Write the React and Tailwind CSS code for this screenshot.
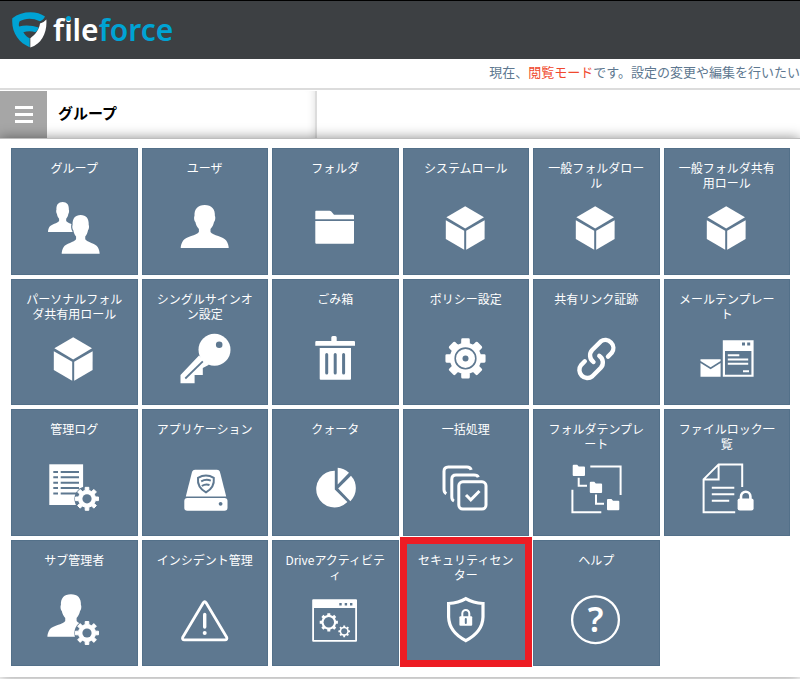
const TILE = '#5e7890';

// Outline of a cog, teeth included
const gearPath = (cx, cy, outer, inner, teeth) => {
  const step = (Math.PI * 2) / teeth;
  const pts = [];
  for (let i = 0; i < teeth; i++) {
    const a = i * step - Math.PI / 2;
    [[-0.27, inner], [-0.2, outer], [0.2, outer], [0.27, inner]].forEach(([k, r]) => {
      pts.push(`${(cx + r * Math.cos(a + k * step)).toFixed(2)} ${(cy + r * Math.sin(a + k * step)).toFixed(2)}`);
    });
  }
  return `M${pts.join('L')}Z`;
};

const Icon = ({ children }) => (
  <svg viewBox="0 0 60 60" className="mt-2 size-[60px] shrink-0" fill="#fff" aria-hidden="true">
    {children}
  </svg>
);

const PERSON =
  'M24 0C31 0 34.6 4 34.2 11C35 12 34.6 16 33.3 17C32.8 20 31.5 22 29.8 24V27C32 30.5 43 31.5 45.5 35.5C47.3 38 48 41 48 43H0C0 41 .7 38 2.5 35.5C5 31.5 16 30.5 18.2 27V24C16.5 22 15.2 20 14.7 17C13.4 16 13 12 13.8 11C13.4 4 17 0 24 0Z';

const GroupIcon = () => (
  <Icon>
    <path d={PERSON} transform="translate(4 4) scale(.61 .7)" />
    <path d={PERSON} transform="translate(17.7 17) scale(.79 .9)" stroke={TILE} strokeWidth="3" paintOrder="stroke" />
  </Icon>
);

const UserIcon = () => (
  <Icon>
    <path d={PERSON} transform="translate(5.7 7)" />
  </Icon>
);

const FolderIcon = () => (
  <Icon>
    <path d="M10.3 21.3V13.5Q10.3 12.7 11 12.7H24.5Q25.5 12.7 26.3 13.6L29 16.8H48Q49 16.8 49 17.8V21.3Z" />
    <path d="M10.3 23H49V44.7Q49 45.8 48 45.8H11.3Q10.3 45.8 10.3 44.7Z" />
  </Icon>
);

const CubeIcon = () => (
  <Icon>
    <path d="M29.2 8.3L48 19.3L29.2 30.4L10.4 19.3Z" />
    <path d="M9.8 22.2L28.2 32.8V51.8L9.8 41.1Z" />
    <path d="M48.6 22.2L30.2 32.8V51.8L48.6 41.1Z" />
  </Icon>
);

const KeyIcon = () => (
  <Icon>
    <circle cx="39.5" cy="20.8" r="16" />
    <path d="M24 26.5L5.5 46V54.3H19.6V46H27.8V39L34 35.8Z" />
    <circle cx="44.2" cy="15.7" r="3.3" fill={TILE} />
    <path d="M10.3 49.5L27.8 32.4" stroke={TILE} strokeWidth="1.8" />
  </Icon>
);

const TrashIcon = () => (
  <Icon>
    <path d="M26.3 12V8.5Q26.3 7 27.8 7H30.2Q31.7 7 31.7 8.5V12H49Q50 12 50 13V16.8H10.3V13Q10.3 12 11.3 12Z" />
    <path d="M14.7 19H46V49.7Q46 50.8 45 50.8H15.7Q14.7 50.8 14.7 49.7Z" />
    <path d="M21.7 25.5V44M30.2 25.5V44M38.6 25.5V44" stroke={TILE} strokeWidth="3" strokeLinecap="round" />
  </Icon>
);

const GearIcon = () => (
  <Icon>
    <path d={gearPath(29.5, 29.4, 19, 14.6, 8)} stroke="#fff" strokeWidth="2.6" strokeLinejoin="round" />
    <circle cx="29.5" cy="29.4" r="10.3" fill="none" stroke={TILE} strokeWidth="1.6" />
    <circle cx="29.5" cy="29.4" r="3" fill={TILE} />
  </Icon>
);

const LinkIcon = () => (
  <Icon>
    <g fill="none" stroke="#fff" strokeWidth="4.4" strokeLinecap="round">
      <path d="M42 27.6L45.7 23.9A8 8 0 0 0 34.6 12.6L26.2 21A8 8 0 0 0 27.5 33" />
      <path d="M18.8 32.3L15.2 35.9A8 8 0 0 0 26.4 47.2L34.8 38.8A8 8 0 0 0 33.3 26.8" />
    </g>
  </Icon>
);

const MailTemplateIcon = () => (
  <Icon>
    <path d="M3.5 30.3H23.6V32L13.6 38.2L3.5 32Z" />
    <path d="M3.5 34L13.6 40.3L23.6 34V47.8H3.5Z" />
    <path fillRule="evenodd" d="M25.8 11.3H56.6V47.8H25.8ZM28 22V45.8H54.4V22Z" />
    <path d="M45 13.6h3v3h-3zM50.2 13.6h3v3h-3z" fill={TILE} />
    <path d="M30.8 26.2H42.3M30.8 30.5H51.2M30.8 34.8H51.2M46 42.2H52" stroke="#fff" strokeWidth="2" />
  </Icon>
);

const SmallGear = ({ cy }) => (
  <>
    <circle cx="43" cy={cy} r="12.6" fill={TILE} />
    <path d={gearPath(43, cy, 11.6, 8.6, 8)} stroke="#fff" strokeWidth="1" strokeLinejoin="round" />
    <circle cx="43" cy={cy} r="4.6" fill={TILE} />
  </>
);

const LogIcon = () => (
  <Icon>
    <rect x="5.3" y="5.3" width="33.8" height="40.7" />
    <path
      d="M9.3 13H14M16.7 13H35M9.3 18.3H14M16.7 18.3H35M9.3 23.7H14M16.7 23.7H35M9.3 29H14M16.7 29H35M9.3 34.4H14M16.7 34.4H35"
      stroke={TILE}
      strokeWidth="2"
    />
    <SmallGear cy={39.8} />
  </Icon>
);

const DriveIcon = () => (
  <Icon>
    <path d="M20 10.7H42Q44.2 10.7 44.9 12.8L51.2 37.4H10.8L17.1 12.8Q17.8 10.7 20 10.7Z" />
    <rect x="9.3" y="39" width="43.2" height="12.8" rx="3" />
    <circle cx="45.6" cy="44.8" r="1.9" fill={TILE} />
    <path
      d="M23 18.8Q31 14.2 38.8 18.8Q39.8 28.5 31 33.3Q22 28.5 23 18.8ZM26.2 22.3Q31 19.8 35.8 21.6M26.8 27Q30.5 24.7 34.5 26"
      fill="none"
      stroke={TILE}
      strokeWidth="2"
    />
  </Icon>
);

const PieIcon = () => (
  <Icon>
    <path d="M29.8 11.8V30.5L42.4 43.1A18.3 18.3 0 1 1 29.8 11.8Z" />
    <path d="M32.7 8.8Q39 9.2 44 13.8L32.7 25.6Z" />
    <path d="M46 16.7A18.4 18.4 0 0 1 45.4 42.2L33.2 29.6Z" />
  </Icon>
);

const BatchIcon = () => (
  <Icon>
    <g fill="none" stroke="#fff" strokeWidth="3">
      <rect x="22.8" y="22.8" width="27.2" height="27.2" rx="4" />
      <path d="M30 36L34.8 40.8L43.5 32" />
      <path d="M18 42Q15.8 41 15.8 38V20.3Q15.8 16 20 16H38Q41.5 16 42.3 18.3" />
      <path d="M10.3 34.8Q8 33.5 8 30.5V12.3Q8 8 12.3 8H31Q34.4 8 35.2 10.8" />
    </g>
  </Icon>
);

const MiniFolder = ({ x, y }) => (
  <path transform={`translate(${x} ${y})`} d="M0 1Q0 0 1 0H4.5L6 1.7H11.3Q12.3 1.7 12.3 2.7V10.2Q12.3 11.2 11.3 11.2H1Q0 11.2 0 10.2Z" />
);

const FolderTemplateIcon = () => (
  <Icon>
    <MiniFolder x={6.7} y={5.7} />
    <MiniFolder x={23.8} y={22.8} />
    <MiniFolder x={41} y={40} />
    <path
      d="M12.7 18.7V26.7H21M30 35.6V44.8H38M24.3 7.6H54.6V36M6.4 30.7V53.2H35.3"
      fill="none"
      stroke="#fff"
      strokeWidth="2"
    />
  </Icon>
);

const FileLockIcon = () => (
  <Icon>
    <g fill="none" stroke="#fff" strokeWidth="2">
      <path d="M45.2 28V5.4H21.6L6.6 20.4V53.3H38.2M21.6 5.4V20.4H6.6M14.8 28.8H37.3M14.8 35.3H37.3M14.8 41.7H32.2" />
      <path d="M44 40V37.5A4.7 4.7 0 0 1 53.4 37.5V40" strokeWidth="2.6" />
    </g>
    <rect x="40.6" y="39.4" width="16" height="12" rx="2.2" />
  </Icon>
);

const SubAdminIcon = () => (
  <Icon>
    <path d={PERSON} transform="translate(3.4 4.2) scale(.98 .99)" />
    <path d="M38 34H58V50H38Z" fill={TILE} />
    <SmallGear cy={43} />
  </Icon>
);

const WarningIcon = () => (
  <Icon>
    <path
      d="M28.3 12.8Q29.7 10.7 31.1 12.8L51.7 47.3Q52.5 49.8 50 49.9H9.4Q6.9 49.8 7.7 47.3Z"
      fill="none"
      stroke="#fff"
      strokeWidth="2.8"
    />
    <path d="M29.7 24.5V37" stroke="#fff" strokeWidth="3.4" strokeLinecap="round" />
    <circle cx="29.7" cy="43" r="2" />
  </Icon>
);

const DriveActivityIcon = () => (
  <Icon>
    <path fillRule="evenodd" d="M8.2 9.3H51Q52 9.3 52 10.3V50.8Q52 51.8 51 51.8H8.2Q7.2 51.8 7.2 50.8V10.3Q7.2 9.3 8.2 9.3ZM9 18V50H50.2V18Z" />
    <path d="M34.3 13h2.4v2.4h-2.4zM39.7 13h2.4v2.4h-2.4zM45 13h2.4v2.4h-2.4z" fill={TILE} />
    <path d={gearPath(23.8, 32.3, 9.2, 7.4, 8)} />
    <circle cx="23.8" cy="32.3" r="5.2" fill={TILE} />
    <path d={gearPath(39.2, 41.3, 5.9, 4.6, 8)} />
    <circle cx="39.2" cy="41.3" r="3" fill={TILE} />
  </Icon>
);

const ShieldIcon = () => (
  <Icon>
    <path
      d="M29.8 8.6Q37 13 47 13.5V27Q46.5 42 29.8 50.6Q13.1 42 12.6 27V13.5Q22.6 13 29.8 8.6Z"
      fill="none"
      stroke="#fff"
      strokeWidth="3.2"
    />
    <rect x="23.4" y="26.3" width="12.8" height="9.4" rx="1" />
    <path d="M26.3 27V23.5A3.5 3.5 0 0 1 33.3 23.5V27" fill="none" stroke="#fff" strokeWidth="2" />
    <path d="M29.8 29V33" stroke={TILE} strokeWidth="2" strokeLinecap="round" />
  </Icon>
);

const HelpIcon = () => (
  <Icon>
    <circle cx="29.5" cy="29.7" r="23.4" fill="none" stroke="#fff" strokeWidth="2.3" />
    <text x="29.5" y="42" textAnchor="middle" className="font-['Noto_Sans',sans-serif] text-[34px] font-semibold">?</text>
  </Icon>
);

const menu = [
  { label: 'グループ', icon: GroupIcon },
  { label: 'ユーザ', icon: UserIcon },
  { label: 'フォルダ', icon: FolderIcon },
  { label: 'システムロール', icon: CubeIcon },
  { label: '一般フォルダロール', icon: CubeIcon },
  { label: '一般フォルダ共有用ロール', icon: CubeIcon },
  { label: 'パーソナルフォルダ共有用ロール', icon: CubeIcon },
  { label: 'シングルサインオン設定', icon: KeyIcon },
  { label: 'ごみ箱', icon: TrashIcon },
  { label: 'ポリシー設定', icon: GearIcon },
  { label: '共有リンク証跡', icon: LinkIcon },
  { label: 'メールテンプレート', icon: MailTemplateIcon },
  { label: '管理ログ', icon: LogIcon },
  { label: 'アプリケーション', icon: DriveIcon },
  { label: 'クォータ', icon: PieIcon },
  { label: '一括処理', icon: BatchIcon },
  { label: 'フォルダテンプレート', icon: FolderTemplateIcon },
  { label: 'ファイルロック一覧', icon: FileLockIcon },
  { label: 'サブ管理者', icon: SubAdminIcon },
  { label: 'インシデント管理', icon: WarningIcon },
  { label: 'Driveアクティビティ', icon: DriveActivityIcon },
  { label: 'セキュリティセンター', icon: ShieldIcon, highlighted: true },
  { label: 'ヘルプ', icon: HelpIcon },
];

const Tile = ({ label, icon: TileIcon, highlighted }) => (
  <a href="#" className="relative flex aspect-square flex-col items-center border border-[#537089] bg-[#5e7890] px-[10px] pt-[11px] text-white">
    <span className="h-[30px] text-center text-[12px] leading-[15px] break-all [line-break:anywhere]">{label}</span>
    <TileIcon />
    {highlighted && <span className="absolute -inset-x-1 -top-1 -bottom-[2px] border-[7px] border-[#ed1c24]" />}
  </a>
);

const Logo = () => (
  <a href="#" className="flex items-center gap-[6px]">
    <svg viewBox="0 0 105 107" className="h-9 w-[35px]" aria-hidden="true">
      <path
        fill="#00a3d4"
        d="M1 18C30 -5 75 -5 99 13C94 22 90 25 84 27C60 16 40 18 23 27C20 32 20 38 21 43C40 38 62 40 80 46C78 52 75 57 70 60C60 56 45 56 34 60C40 70 47 76 53 78V105C20 92 -3 60 1 18Z"
      />
      <path fill="#fff" d="M103 22C106 60 90 95 55 106V78C72 66 82 50 84 34C92 32 98 28 103 22Z" />
    </svg>
    <span className="relative font-['Noto_Sans',sans-serif] text-[30px] leading-[36px] font-semibold text-white [font-variant-ligatures:none]">
      file<span className="text-[#00a3d4]">force</span>
      <span className="absolute top-1 left-[13px] size-[5px] rounded-full bg-[#00a3d4]" />
    </span>
  </a>
);

export default function App() {
  return (
    <div lang="ja" className="min-h-screen overflow-hidden bg-white font-['Noto_Sans_CJK_JP',sans-serif]">
      <header className="flex h-[59px] items-center border-t border-black bg-[#3d4043] px-3">
        <Logo />
      </header>

      <p className="flex h-[31px] items-center justify-end border-b-2 border-[#dcdcdc] pb-1 text-[13px] leading-[20px] whitespace-nowrap text-[#5e7890]">
        現在、<span className="text-[#f0492e]">閲覧モード</span>です。設定の変更や編集を行いたい
      </p>

      <div className="flex h-12 pt-px">
        <button type="button" aria-label="メニュー" className="flex w-[47px] flex-col items-center justify-center gap-1 bg-[#a6a6a6]">
          <span className="h-[3px] w-[18px] bg-white" />
          <span className="h-[3px] w-[18px] bg-white" />
          <span className="h-[3px] w-[18px] bg-white" />
        </button>
        <div className="flex w-[270px] items-center border-r-2 border-[#dcdcdc] pb-1 pl-[11px] shadow-[inset_-8px_0_8px_-8px_rgba(0,0,0,0.15)]">
          <h1 className="text-[15px] leading-[20px] font-bold text-black">グループ</h1>
        </div>
      </div>

      <nav className="relative border-t border-[#bdbdbd] bg-white pt-[9px] pr-[10px] pb-[11px] pl-[11px] shadow-[0_0_12px_rgba(0,0,0,0.45)]">
        <div className="grid grid-cols-6 gap-1">
          {menu.map((item) => (
            <Tile key={item.label} {...item} />
          ))}
        </div>
      </nav>
    </div>
  );
}
